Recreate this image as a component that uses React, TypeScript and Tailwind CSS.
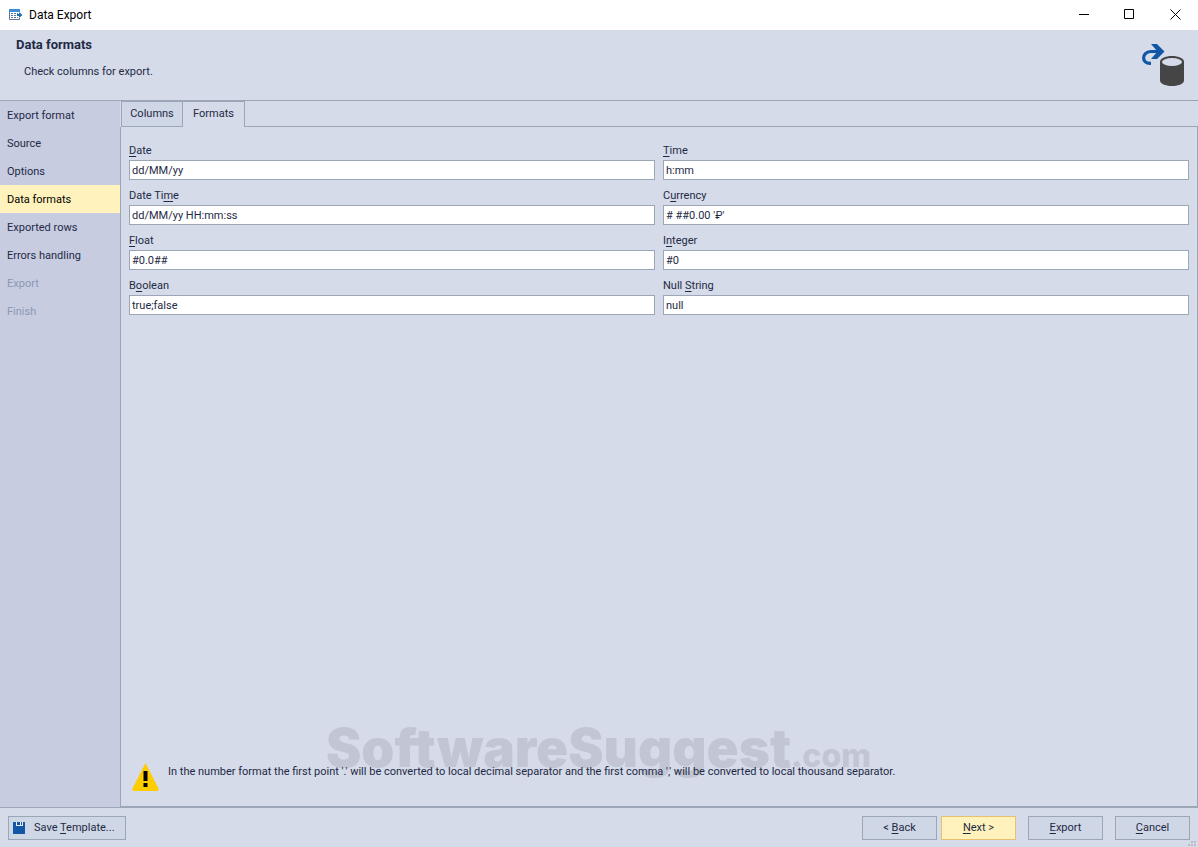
import { ReactNode } from "react";

function Mnemonic({ text, at }: { text: string; at: number }) {
  return (
    <span className="whitespace-pre">
      {text.slice(0, at)}
      <span className="underline underline-offset-2">{text[at]}</span>
      {text.slice(at + 1)}
    </span>
  );
}

const steps = [
  "Export format",
  "Source",
  "Options",
  "Data formats",
  "Exported rows",
  "Errors handling",
  "Export",
  "Finish",
];

const fields = [
  { id: "date", label: "Date", at: 0, value: "dd/MM/yy" },
  { id: "time", label: "Time", at: 0, value: "h:mm" },
  { id: "datetime", label: "Date Time", at: 7, value: "dd/MM/yy HH:mm:ss" },
  { id: "currency", label: "Currency", at: 1, value: "# ##0.00 '₽'" },
  { id: "float", label: "Float", at: 0, value: "#0.0##" },
  { id: "integer", label: "Integer", at: 1, value: "#0" },
  { id: "boolean", label: "Boolean", at: 1, value: "true;false" },
  { id: "null", label: "Null String", at: 5, value: "null" },
];

function WindowButton({ label, children }: { label: string; children: ReactNode }) {
  return (
    <button aria-label={label} className="flex h-full w-[46px] items-center justify-center">
      <svg width="11" height="11" viewBox="0 0 11 11" fill="none" stroke="#000" className="-mt-px">
        {children}
      </svg>
    </button>
  );
}

function TitleBar() {
  return (
    <div className="flex h-[30px] items-center bg-white pl-2">
      <svg width="15" height="12" viewBox="0 0 15 12" className="mr-[6px]">
        <path d="M1.500 1v9.500h10V9" fill="none" stroke="#5c7599" />
        <path d="M1 0h11v3H1z" fill="#3c8fd4" />
        <path
          d="M3 4h2v1H3zM6 4h2v1H6zM9 4h1v1H9zM3 6h2v1H3zM6 6h2v1H6zM3 8h2v1H3zM6 8h2v1H6zM9 8h1v1H9z"
          fill="#5c7599"
        />
        <path d="M9 5h2V3l3.500 3L11 9V7H9z" fill="#1f6fae" />
      </svg>
      <span className="text-[12px] text-black">Data Export</span>
      <div className="ml-auto flex h-full">
        <WindowButton label="Minimize">
          <path d="M1 5.500h10" />
        </WindowButton>
        <WindowButton label="Maximize">
          <path d="M.5 .5h9v9h-9z" />
        </WindowButton>
        <WindowButton label="Close">
          <path d="M.5 .5l10 10M10.500 .5l-10 10" />
        </WindowButton>
      </div>
    </div>
  );
}

function Header() {
  return (
    <header className="flex h-[71px] justify-between border-b border-[#9ba7b7] pr-3 pl-4">
      <div>
        <h1 className="mt-2 text-[13px] leading-[14px] font-bold">Data formats</h1>
        <p className="mt-[13px] pl-2 leading-[14px]">Check columns for export.</p>
      </div>
      <svg width="44" height="44" viewBox="0 0 44 44" className="mt-[14px]">
        <path
          d="M9 19.300H8C4 19.300 1.600 17 1.600 14s2.600-6.500 6.900-6.500h10"
          fill="none"
          stroke="#1157a6"
          strokeWidth="3.200"
        />
        <path d="M9 0h6l7.500 7.500L15 15H9l6.500-7.500z" fill="#1157a6" />
        <path d="M18 17.500C18 14.500 23 12 30 12s12 2.500 12 5.500v19c0 3-5 5.500-12 5.500s-12-2.500-12-5.500z" fill="#454545" />
        <ellipse cx="30" cy="18" rx="10" ry="4" fill="#d5dbe9" />
      </svg>
    </header>
  );
}

function Steps() {
  return (
    <nav className="w-[120px] shrink-0 bg-[#c7cce1]">
      {steps.map((step) => {
        const active = step === "Data formats";
        const disabled = step === "Export" || step === "Finish";
        return (
          <button
            key={step}
            disabled={disabled}
            className={
              "block h-7 w-full pt-[2px] pl-[7px] text-left " +
              (active ? "bg-[#fff2bc] text-black" : disabled ? "text-[#8b99b3]" : "")
            }
          >
            {step}
          </button>
        );
      })}
    </nav>
  );
}

function Tabs() {
  return (
    <div role="tablist" className="flex h-[26px]">
      <button role="tab" aria-selected="false" className="w-[61px] border border-r-0 border-[#9ba7b7] bg-[#cfd6e5]">
        Columns
      </button>
      <button role="tab" aria-selected="true" className="w-[63px] border border-b-0 border-[#9ba7b7] pb-px">
        Formats
      </button>
      <div className="grow border-b border-[#9ba7b7]" />
    </div>
  );
}

function Notice() {
  return (
    <div className="relative mt-auto flex items-start pb-[15px] pl-[3px]">
      <div
        aria-hidden="true"
        className="absolute bottom-[18px] left-[197px] font-['Inter','Open_Sans',sans-serif] text-[53px] leading-[64px] font-black whitespace-nowrap text-[#c2c6d4]"
      >
        SoftwareSuggest<span className="text-[32px] font-extrabold">.com</span>
      </div>
      <svg width="27" height="28" viewBox="0 0 27 28" className="relative shrink-0">
        <path d="M13.500 0L26.500 25.500Q27 28 25 28H2Q0 28 .5 25.500z" fill="#ffcc00" />
        <path d="M11.500 8h4v10h-4zM11.500 20h4v4h-4z" fill="#000" />
      </svg>
      <p className="relative ml-[9px] leading-[18px]">
        In the number format the first point '.' will be converted to local decimal separator and the first comma ',' will be
        converted to local thousand separator.
      </p>
    </div>
  );
}

function Footer() {
  const button = "h-6 w-[75px] border border-[#9ba7b7] bg-[#cfd6e5] pt-[2px]";
  return (
    <footer className="relative flex h-10 items-center border-t border-[#9ba7b7] px-2">
      <button className="flex h-6 w-[118px] items-center border border-[#9ba7b7] bg-[#cfd6e5] pl-1">
        <svg width="12" height="12" viewBox="0 0 12 12" className="mr-[9px]">
          <path d="M0 0h12v12H0z" fill="#1157a6" />
          <path d="M3 0h7v4H3z" fill="#e8edf6" />
          <path d="M4 0h3v3H4zM8 0h1v3H8z" fill="#1157a6" />
        </svg>
        <span className="pt-[2px]">
          <Mnemonic text="Save Template..." at={5} />
        </span>
      </button>
      <div className="ml-auto flex gap-3">
        <div className="flex gap-1">
          <button className={button}>
            <Mnemonic text="< Back" at={2} />
          </button>
          <button className="h-6 w-[75px] border border-[#e8c16a] bg-[#fff2bc] pt-[2px]">
            <Mnemonic text="Next >" at={0} />
          </button>
        </div>
        <button className={button}>
          <Mnemonic text="Export" at={0} />
        </button>
        <button className={button}>
          <Mnemonic text="Cancel" at={0} />
        </button>
      </div>
      <svg width="8" height="5" viewBox="0 0 8 5" className="absolute right-[2px] bottom-px">
        <path d="M3 0h2v2H3zM6 0h2v2H6zM0 3h2v2H0zM3 3h2v2H3zM6 3h2v2H6z" fill="#b9bcc6" />
      </svg>
    </footer>
  );
}

export default function App() {
  return (
    <div className="flex min-h-screen flex-col bg-[#d5dbe9] font-['Roboto','Noto_Sans',sans-serif] text-[11px] text-[#1e2a45]">
      <TitleBar />
      <Header />
      <div className="flex grow">
        <Steps />
        <main className="flex grow flex-col">
          <div className="pl-px">
            <Tabs />
          </div>
          <div className="flex grow flex-col border-r border-b border-l border-[#9ba7b7] px-2 pt-[17px]">
            <div className="grid grid-cols-2 gap-x-2 gap-y-[9px]">
              {fields.map((f) => (
                <div key={f.id} className="flex flex-col gap-[2px]">
                  <label htmlFor={f.id} className="leading-[14px]">
                    <Mnemonic text={f.label} at={f.at} />
                  </label>
                  <input
                    id={f.id}
                    defaultValue={f.value}
                    className="h-5 w-full border border-[#9ba7b7] bg-white px-[2px] outline-none"
                  />
                </div>
              ))}
            </div>
            <Notice />
          </div>
        </main>
      </div>
      <Footer />
    </div>
  );
}
